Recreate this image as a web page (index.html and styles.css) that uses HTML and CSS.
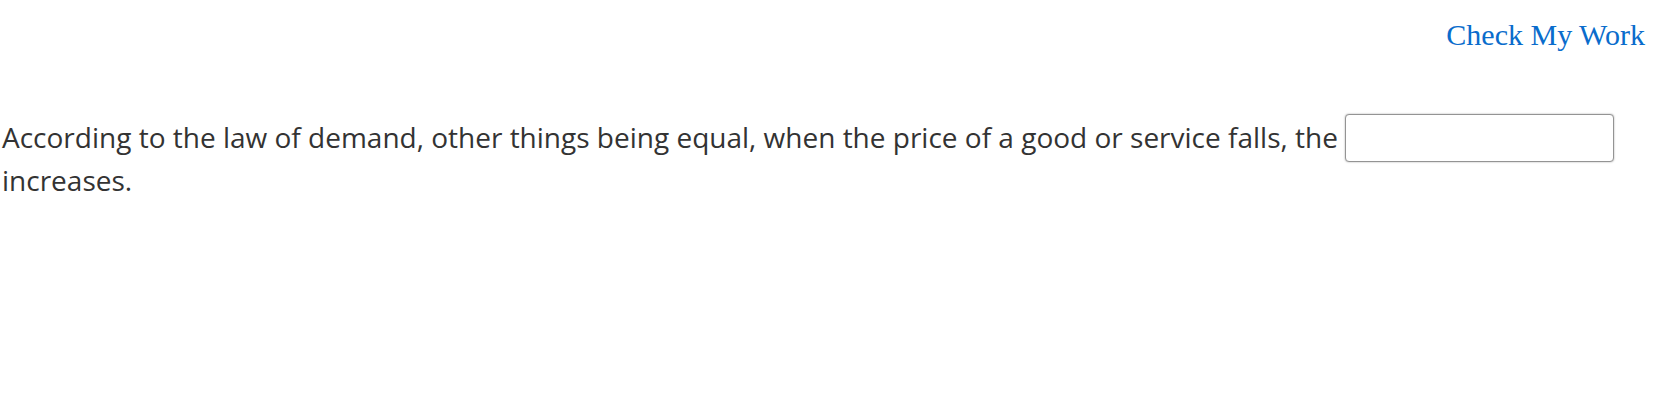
FILE: index.html
```html
<!DOCTYPE html>
<html lang="en">

<head>
    <meta charset="UTF-8">
    <title>Question</title>
    <link rel="stylesheet" href="styles.css">
</head>

<body>
    <div class="toolbar">
        <a href="#" class="check-link">Check My Work</a>
    </div>

    <div class="question">
        <p>According to the law of demand, other things being equal, when the price of a good or service falls, the
            <input type="text" class="blank"> increases.</p>
    </div>
</body>

</html>
```

FILE: styles.css
```css
body {
    margin: 0;
    background: #fff;
    font-family: 'Open Sans', sans-serif;
    color: #333;
}

.toolbar {
    display: flex;
    justify-content: flex-end;
    padding: 18px 21px 0 0;
}

.check-link {
    font-family: 'Liberation Serif', Georgia, serif;
    font-size: 30px;
    line-height: 34px;
    color: #0a6ccc;
    text-decoration: none;
}

.question {
    padding: 0 22px 0 2px;
}

.question p {
    margin: 64px 0 0;
    font-size: 28px;
    line-height: 43px;
}

.blank {
    width: 269px;
    height: 48px;
    margin: -2px 0 -3px;
    box-sizing: border-box;
    border: 1px solid #949494;
    border-radius: 4px;
    box-shadow: 0 0 2px rgba(0, 0, 0, 0.35);
    vertical-align: top;
    font-size: 20px;
    padding: 0 8px;
}
```
